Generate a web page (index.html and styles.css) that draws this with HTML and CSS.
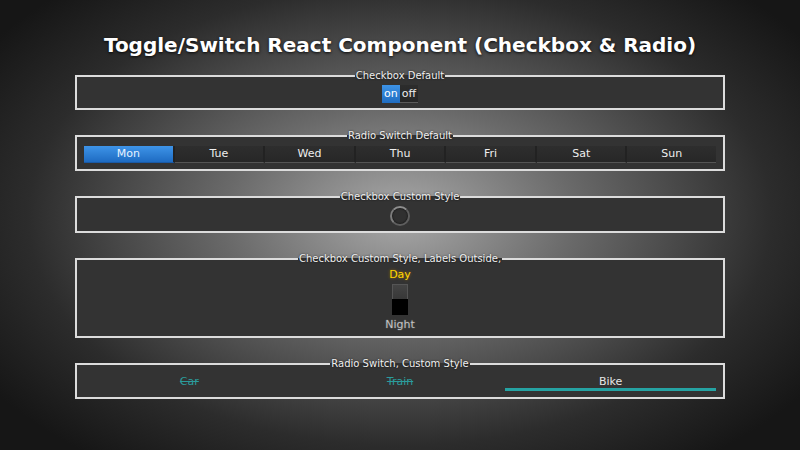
FILE: index.html
```html
<!DOCTYPE html>
<html lang="en">
<head>
    <meta charset="UTF-8">
    <meta name="viewport" content="width=device-width, initial-scale=1.0">
    <title>Toggle/Switch React Component</title>
    <link rel="stylesheet" href="styles.css">
</head>
<body>
    <h1 class="title">Toggle/Switch React Component (Checkbox &amp; Radio)</h1>

    <fieldset class="demo">
        <legend>Checkbox Default</legend>
        <div class="switch-default">
            <span class="switch-on">on</span><span class="switch-off">off</span>
        </div>
    </fieldset>

    <fieldset class="demo">
        <legend>Radio Switch Default</legend>
        <div class="radio-default">
            <span class="radio-item active">Mon</span>
            <span class="radio-item">Tue</span>
            <span class="radio-item">Wed</span>
            <span class="radio-item">Thu</span>
            <span class="radio-item">Fri</span>
            <span class="radio-item">Sat</span>
            <span class="radio-item">Sun</span>
        </div>
    </fieldset>

    <fieldset class="demo">
        <legend>Checkbox Custom Style</legend>
        <div class="ring-wrap">
            <span class="ring"></span>
        </div>
    </fieldset>

    <fieldset class="demo">
        <legend>Checkbox Custom Style, Labels Outside,</legend>
        <div class="daynight">
            <span class="label-day">Day</span>
            <span class="vswitch">
                <span class="vswitch-top"></span>
                <span class="vswitch-bottom"></span>
            </span>
            <span class="label-night">Night</span>
        </div>
    </fieldset>

    <fieldset class="demo custom">
        <legend>Radio Switch, Custom Style</legend>
        <div class="radio-custom">
            <span class="custom-item off">Car</span>
            <span class="custom-item off">Train</span>
            <span class="custom-item on">Bike</span>
        </div>
    </fieldset>
</body>
</html>
```

FILE: styles.css
```css
html {
    height: 100%;
}

body {
    margin: 0;
    min-height: 100%;
    background: radial-gradient(ellipse 62% 68% at 50% 48%, #a9a9a9 0%, #6a6a6a 35%, #2c2c2c 75%, #161616 100%);
    font-family: "DejaVu Sans", Verdana, sans-serif;
    color: #eee;
    overflow: hidden;
}

.title {
    margin: 0;
    padding: 33px 0 12px;
    text-align: center;
    font-size: 20px;
    font-weight: bold;
    color: #fff;
    text-shadow: 0 1px 3px rgba(0, 0, 0, 0.9);
}

.demo {
    width: 650px;
    box-sizing: border-box;
    margin: 0 auto 19px;
    padding: 3px 7px 5px;
    border: 2px solid #dcdcdc;
    background: #333;
}

.demo.custom {
    padding-bottom: 6px;
}

.demo legend {
    margin: 0 auto;
    padding: 0 1px;
    font-size: 10px;
    line-height: 13px;
    color: #f0f0f0;
    text-shadow: 0 0 2px rgba(0, 0, 0, 0.8);
}

/* Checkbox default */
.switch-default {
    display: flex;
    justify-content: center;
    font-size: 11px;
    line-height: 17px;
}

.switch-on {
    padding: 0 2px;
    background: linear-gradient(#3d93e6, #1f6cc0);
    color: #fff;
}

.switch-off {
    padding: 0 2px;
    background: linear-gradient(#2c2c2c, #262626);
    border-bottom: 1px solid #5a5a5a;
    color: #eee;
}

/* Radio default */
.radio-default {
    display: flex;
    margin: 1px 0;
    font-size: 11px;
    line-height: 16px;
}

.radio-item {
    flex: 1;
    text-align: center;
    background: linear-gradient(#2e2e2e, #272727);
    border-right: 2px solid #222;
    border-bottom: 1px solid #555;
    color: #eee;
}

.radio-item:last-child {
    border-right: none;
}

.radio-item.active {
    background: linear-gradient(#3e94e8, #1e6bc2);
    border-bottom-color: #1a5aa6;
    color: #e8f2ff;
}

/* Checkbox custom: ring */
.ring-wrap {
    display: flex;
    justify-content: center;
}

.ring {
    width: 16px;
    height: 16px;
    border-radius: 50%;
    border: 2px solid #5e5e5e;
    border-top-color: #8e8e8e;
    border-left-color: #7c7c7c;
    background: #303030;
    box-shadow: inset 0 0 2px #000;
}

/* Day / night */
.daynight {
    display: flex;
    flex-direction: column;
    align-items: center;
    font-size: 11px;
    line-height: 13px;
}

.label-day {
    color: #ffd700;
    text-shadow: 0 0 3px rgba(190, 130, 0, 0.8);
}

.vswitch {
    display: flex;
    flex-direction: column;
    width: 16px;
    margin: 3px 0;
}

.vswitch-top {
    height: 14px;
    background: linear-gradient(#444, #383838);
    border: 1px solid #555;
    border-bottom: none;
}

.vswitch-bottom {
    height: 16px;
    background: #000;
}

.label-night {
    color: #c4c4c4;
    text-shadow: 1px 0 0 rgba(70, 70, 70, 0.8), -1px 0 0 rgba(70, 70, 70, 0.8), 0 1px 0 rgba(70, 70, 70, 0.8), 0 -1px 0 rgba(70, 70, 70, 0.8);
}

/* Radio custom */
.radio-custom {
    display: flex;
    font-size: 11px;
    line-height: 12px;
    padding-top: 3px;
}

.custom-item {
    flex: 1;
    text-align: center;
    border-bottom: 3px solid transparent;
}

.custom-item.off {
    color: #2b9c9c;
    text-decoration: line-through;
}

.custom-item.on {
    color: #e6e6e6;
    border-bottom-color: #25a3a3;
}
```
